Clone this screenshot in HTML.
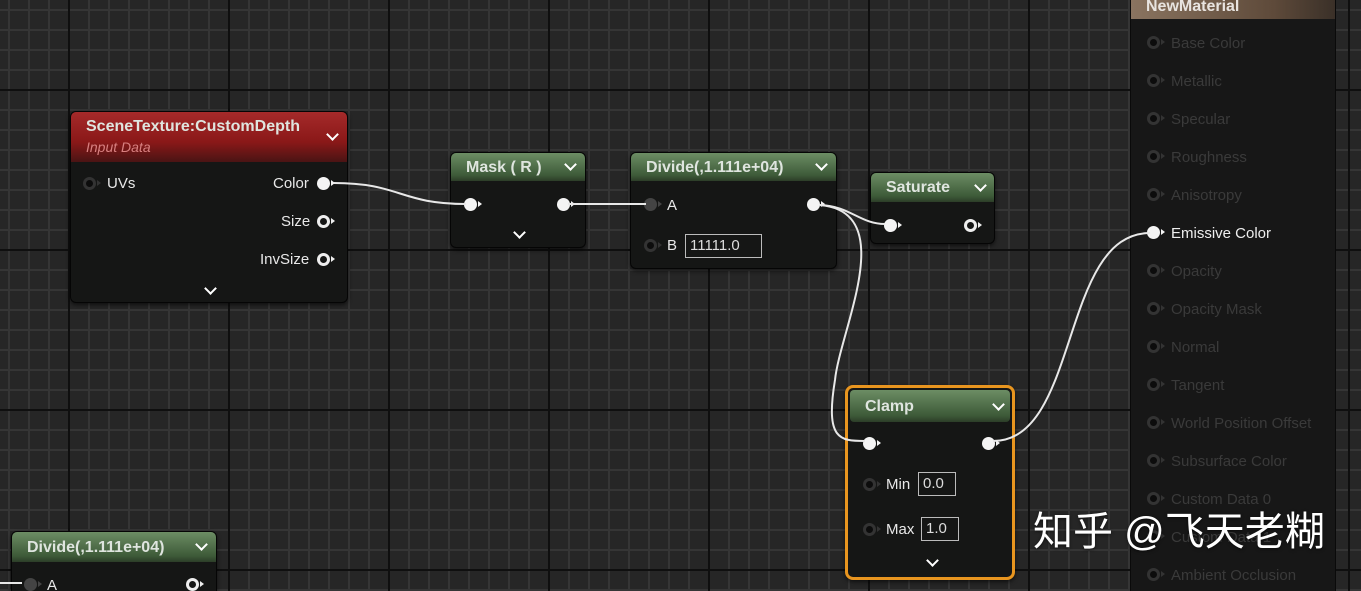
<!DOCTYPE html>
<html style="width:1361px;height:591px;overflow:hidden"><head><meta charset="utf-8"><style>
*{margin:0;padding:0;box-sizing:border-box}
body{width:1361px;height:591px;overflow:hidden;position:relative;font-family:"Liberation Sans","DejaVu Sans",sans-serif;
background-color:#262626;
background-image:
linear-gradient(to right,#0f0f0f 2px,transparent 2px),
linear-gradient(to bottom,#0f0f0f 2px,transparent 2px),
linear-gradient(to right,#353535 2px,transparent 2px),
linear-gradient(to bottom,#353535 2px,transparent 2px);
background-size:160px 160px,160px 160px,20px 20px,20px 20px;
background-position:68px 0,0 89px,8px 0,0 9px;}
.node{position:absolute;background:#151615;border:1px solid #050505;border-radius:6px;box-shadow:0 2px 4px rgba(0,0,0,.6);color:#e8e8e8;font-size:15px}
.hdr{position:absolute;left:0;right:0;top:0;border-radius:5px 5px 0 0;font-weight:bold;color:#dfe5df;font-size:16px;padding-left:15px}
.g{background:linear-gradient(to bottom,#6c8d64,#3d5a38 80%,#2c3e28);}
.chev{position:absolute;width:9px;height:9px;border-right:2.5px solid #fff;border-bottom:2.5px solid #fff;transform:rotate(45deg)}
.pin{position:absolute;width:13px;height:13px;border-radius:50%;}
.pin.f{background:#f4f4f4;color:#f4f4f4}
.pin.f::after,.pin.o::after,.pin.d::after,.pin.ga::after{content:"";position:absolute;right:-5px;top:3px;border-left:4px solid currentColor;border-top:3.5px solid transparent;border-bottom:3.5px solid transparent}
.pin.o{border:3px solid #eee;color:#eee}
.pin.o::after{right:-8px;top:0}
.pin.d{border:3px solid #333;background:#0c0c0c;color:#333}
.pin.d::after{right:-8px;top:0}
.pin.ga{background:#444;color:#444}
.t{position:absolute;white-space:nowrap}
.box{position:absolute;border:1px solid #bbb;font-size:15px;color:#ddd;padding:0 4px;line-height:22px}
.mt{position:absolute;left:40px;color:#3a3a3a;font-size:15px}
</style></head><body>

<!-- SceneTexture -->
<div class="node" style="left:70px;top:111px;width:278px;height:192px">
 <div class="hdr" style="height:50px;background:linear-gradient(to bottom,#a52a2a,#8a1818 60%,#4a1414);padding-top:6px">SceneTexture:CustomDepth
  <div style="font-weight:normal;font-style:italic;font-size:14px;color:#d88080;margin-top:3px">Input Data</div></div>
 <div class="chev" style="left:257px;top:18px"></div>
 <div class="pin d" style="left:12px;top:65px"></div><div class="t" style="left:36px;top:63px">UVs</div>
 <div class="t" style="left:202px;top:63px">Color</div><div class="pin f" style="left:246px;top:65px"></div>
 <div class="t" style="left:210px;top:101px">Size</div><div class="pin o" style="left:246px;top:103px"></div>
 <div class="t" style="left:189px;top:139px">InvSize</div><div class="pin o" style="left:246px;top:141px"></div>
 <div class="chev" style="left:135px;top:172px"></div>
</div>

<!-- Mask -->
<div class="node" style="left:450px;top:152px;width:136px;height:96px">
 <div class="hdr g" style="height:28px;line-height:29px">Mask ( R )</div>
 <div class="chev" style="left:115px;top:7px"></div>
 <div class="pin f" style="left:13px;top:45px"></div><div class="pin f" style="left:106px;top:45px"></div>
 <div class="chev" style="left:64px;top:75px"></div>
</div>

<!-- Divide -->
<div class="node" style="left:630px;top:152px;width:207px;height:117px">
 <div class="hdr g" style="height:28px;line-height:29px">Divide(,1.111e+04)</div>
 <div class="chev" style="left:186px;top:7px"></div>
 <div class="pin ga" style="left:13px;top:45px"></div><div class="t" style="left:36px;top:44px">A</div>
 <div class="pin f" style="left:176px;top:45px"></div>
 <div class="pin d" style="left:13px;top:86px"></div><div class="t" style="left:36px;top:84px">B</div>
 <div class="box" style="left:54px;top:81px;width:77px;height:24px">11111.0</div>
</div>

<!-- Saturate -->
<div class="node" style="left:870px;top:172px;width:125px;height:72px">
 <div class="hdr g" style="height:29px;line-height:30px">Saturate</div>
 <div class="chev" style="left:105px;top:8px"></div>
 <div class="pin f" style="left:13px;top:46px"></div><div class="pin o" style="left:93px;top:46px"></div>
</div>

<!-- Clamp -->
<div class="node" style="left:845px;top:385px;width:170px;height:195px;border:3px solid #e8951f;border-radius:8px">
 <div class="hdr g" style="height:32px;line-height:34px;margin:2px;border-radius:4px">Clamp</div>
 <div class="chev" style="left:146px;top:12px"></div>
 <div class="pin f" style="left:15px;top:49px"></div><div class="pin f" style="left:134px;top:49px"></div>
 <div class="pin d" style="left:15px;top:90px"></div><div class="t" style="left:38px;top:88px">Min</div>
 <div class="box" style="left:70px;top:84px;width:38px;height:24px">0.0</div>
 <div class="pin d" style="left:15px;top:135px"></div><div class="t" style="left:38px;top:133px">Max</div>
 <div class="box" style="left:73px;top:129px;width:38px;height:24px">1.0</div>
 <div class="chev" style="left:80px;top:168px"></div>
</div>

<!-- bottom Divide -->
<div class="node" style="left:11px;top:531px;width:206px;height:62px;border-radius:6px 6px 0 0">
 <div class="hdr g" style="height:30px;line-height:31px">Divide(,1.111e+04)</div>
 <div class="chev" style="left:185px;top:8px"></div>
 <div class="pin ga" style="left:12px;top:46px"></div><div class="t" style="left:35px;top:45px">A</div>
 <div class="pin o" style="left:174px;top:46px"></div>
</div>

<!-- Material -->
<div style="position:absolute;left:1130px;top:0;width:206px;height:591px;background:#171717;border-left:1px solid #0a0a0a;border-right:1px solid #0a0a0a">
 <div style="height:19px;background:linear-gradient(to right,#8a7460,#5e4a3a 70%,#3a3028);color:#e8e4e0;font-weight:bold;font-size:16px;padding-left:15px;line-height:14px">NewMaterial</div>
 <div class="pin d" style="left:16px;top:36px"></div><div class="mt" style="top:35px">Base Color</div>
 <div class="pin d" style="left:16px;top:74px"></div><div class="mt" style="top:73px">Metallic</div>
 <div class="pin d" style="left:16px;top:112px"></div><div class="mt" style="top:111px">Specular</div>
 <div class="pin d" style="left:16px;top:150px"></div><div class="mt" style="top:149px">Roughness</div>
 <div class="pin d" style="left:16px;top:188px"></div><div class="mt" style="top:187px">Anisotropy</div>
 <div class="pin f" style="left:16px;top:226px"></div><div class="mt" style="top:225px;color:#eee">Emissive Color</div>
 <div class="pin d" style="left:16px;top:264px"></div><div class="mt" style="top:263px">Opacity</div>
 <div class="pin d" style="left:16px;top:302px"></div><div class="mt" style="top:301px">Opacity Mask</div>
 <div class="pin d" style="left:16px;top:340px"></div><div class="mt" style="top:339px">Normal</div>
 <div class="pin d" style="left:16px;top:378px"></div><div class="mt" style="top:377px">Tangent</div>
 <div class="pin d" style="left:16px;top:416px"></div><div class="mt" style="top:415px">World Position Offset</div>
 <div class="pin d" style="left:16px;top:454px"></div><div class="mt" style="top:453px">Subsurface Color</div>
 <div class="pin d" style="left:16px;top:492px"></div><div class="mt" style="top:491px">Custom Data 0</div>
 <div class="pin d" style="left:16px;top:530px"></div><div class="mt" style="top:529px">Custom Data 1</div>
 <div class="pin d" style="left:16px;top:568px"></div><div class="mt" style="top:567px">Ambient Occlusion</div>
</div>

<svg width="1361" height="591" style="position:absolute;left:0;top:0" fill="none" stroke="#e8e8e8" stroke-width="2">
<path d="M334,183 C400,183 400,204 466,204"/>
<path d="M568,204 L646,204"/>
<path d="M820,205 C850,206 860,224 885,224"/>
<path d="M820,205 C900,212 840,330 835,380 C825,440 840,441 865,441"/>
<path d="M993,441 C1080,441 1060,233 1150,233"/>
<path d="M0,583 L22,583"/>
</svg>

<div class="t" style="left:1033px;top:508px;font-size:40px;color:#fff;font-family:'Liberation Sans','Noto Sans CJK SC',sans-serif;text-shadow:0 1px 3px rgba(0,0,0,.6);line-height:48px">知乎 @飞天老糊</div>
</body></html>
